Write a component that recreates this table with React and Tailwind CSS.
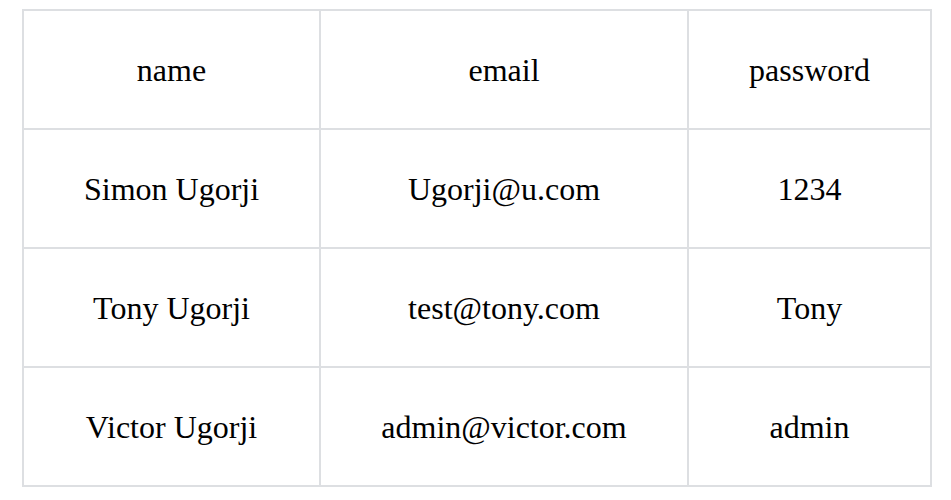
const rows = [
  ['name', 'email', 'password'],
  ['Simon Ugorji', 'Ugorji@u.com', '1234'],
  ['Tony Ugorji', 'test@tony.com', 'Tony'],
  ['Victor Ugorji', 'admin@victor.com', 'admin'],
]

export default function App() {
  return (
    <div className="min-h-screen bg-white pt-[9px] pl-[22px]" style={{ fontFamily: '"Liberation Serif", "Times New Roman", serif' }}>
      <div className="w-fit grid grid-cols-[295px_366px_241px] auto-rows-[117px] gap-[2px] p-[2px] bg-[#dddfe2]">
        {rows.flat().map((cell, i) => (
          <div key={i} className="bg-white flex items-center justify-center text-[32px] text-black">
            {cell}
          </div>
        ))}
      </div>
    </div>
  )
}
